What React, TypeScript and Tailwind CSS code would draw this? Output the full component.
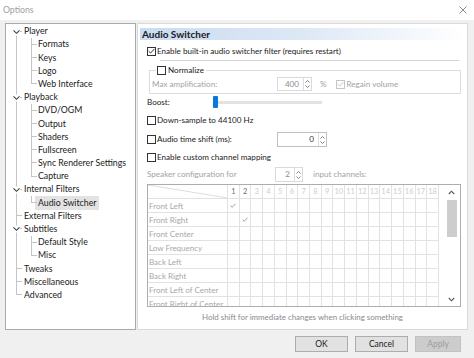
import React from "react";

type TreeNode = { label: string; children?: string[] };

const tree: TreeNode[] = [
  { label: "Player", children: ["Formats", "Keys", "Logo", "Web Interface"] },
  {
    label: "Playback",
    children: ["DVD/OGM", "Output", "Shaders", "Fullscreen", "Sync Renderer Settings", "Capture"],
  },
  { label: "Internal Filters", children: ["Audio Switcher"] },
  { label: "External Filters" },
  { label: "Subtitles", children: ["Default Style", "Misc"] },
  { label: "Tweaks" },
  { label: "Miscellaneous" },
  { label: "Advanced" },
];

const speakers = [
  "Front Left",
  "Front Right",
  "Front Center",
  "Low Frequency",
  "Back Left",
  "Back Right",
  "Front Left of Center",
  "Front Right of Center",
];

const columns = Array.from({ length: 18 }, (_, i) => i + 1);

// one column of tree guide lines (vertical + branch)
const Guide = ({
  level,
  top,
  bottom,
  branch,
  chevron,
}: {
  level: 0 | 1;
  top?: boolean;
  bottom?: boolean;
  branch?: boolean;
  chevron?: boolean;
}) => (
  <div className={`relative flex h-full shrink-0 flex-col ${level === 0 ? "w-[16px]" : "w-[15px]"}`}>
    <div
      className={`h-1/2 border-[#c4c4c4] ${level === 0 ? "ml-[10px]" : "ml-[9px]"} ${top ? "border-l" : ""} ${
        branch ? "border-b" : ""
      }`}
    />
    <div className={`h-1/2 border-[#c4c4c4] ${level === 0 ? "ml-[10px]" : "ml-[9px]"} ${bottom ? "border-l" : ""}`} />
    {chevron && (
      <span className="absolute left-[6px] top-1/2 flex h-[7px] w-[8px] -translate-y-1/2 items-center justify-center bg-white">
        <svg width="7" height="5" viewBox="0 0 7 5">
          <path d="M0.5 0.8 L3.5 3.8 L6.5 0.8" fill="none" stroke="#3c3c3c" strokeWidth="1.1" />
        </svg>
      </span>
    )}
  </div>
);

const Check = ({ checked, disabled }: { checked?: boolean; disabled?: boolean }) => (
  <span
    className={`flex h-[9px] w-[9px] shrink-0 items-center justify-center border bg-white ${
      disabled ? "border-[#c6c6c6]" : "border-[#333333]"
    }`}
  >
    {checked && (
      <svg width="7" height="6" viewBox="0 0 7 6">
        <path
          d="M0.6 3.1 L2.6 5 L6.4 0.9"
          fill="none"
          stroke={disabled ? "#c6c6c6" : "#333333"}
          strokeWidth="1"
        />
      </svg>
    )}
  </span>
);

const Spin = ({ value, width, disabled }: { value: string; width: string; disabled?: boolean }) => (
  <div
    className={`flex h-[15px] shrink-0 border bg-white ${width} ${
      disabled ? "border-[#dadada] text-[#8c8c8c]" : "border-[#bfbfbf] text-[#333333]"
    }`}
  >
    <span className="flex flex-1 items-center justify-end pr-[4px]">{value}</span>
    <div className="flex w-[8px] flex-col items-center justify-center gap-[2px] border-l border-[#dcdcdc]">
      <svg width="5" height="3" viewBox="0 0 5 3">
        <path d="M0.5 2.5 L2.5 0.5 L4.5 2.5" fill="none" stroke="#777777" strokeWidth="0.9" />
      </svg>
      <svg width="5" height="3" viewBox="0 0 5 3">
        <path d="M0.5 0.5 L2.5 2.5 L4.5 0.5" fill="none" stroke="#777777" strokeWidth="0.9" />
      </svg>
    </div>
  </div>
);

const TreePanel = () => {
  const rows: React.ReactNode[] = [];
  tree.forEach((node, i) => {
    const first = i === 0;
    const last = i === tree.length - 1;
    rows.push(
      <div key={node.label} className="flex h-[13.2px] items-center">
        <Guide level={0} top={!first} bottom={!last} branch chevron={!!node.children} />
        <span className="ml-[2px] whitespace-nowrap">{node.label}</span>
      </div>
    );
    node.children?.forEach((child, j) => {
      const selected = child === "Audio Switcher";
      rows.push(
        <div key={child} className="flex h-[13.2px] items-center">
          <Guide level={0} top bottom />
          <Guide level={1} top bottom={j < node.children!.length - 1} branch />
          <span
            className={`flex h-full items-center whitespace-nowrap ${
              selected ? "-ml-[2px] bg-[#e3e3e3] px-[3px]" : "ml-[1px]"
            }`}
          >
            {child}
          </span>
        </div>
      );
    });
  });

  return (
    <div className="flex h-[307px] w-[131px] shrink-0 flex-col border border-[#a9a9a9] bg-white pt-[1px] text-[8.75px] text-[#1a1a1a]">
      {rows}
    </div>
  );
};

const ChannelGrid = () => (
  <div className="mt-[2px] flex h-[123px] w-[314px] overflow-hidden border border-[#adadad] bg-white">
    <div className="flex w-[295px] flex-col">
      <div className="grid h-[14px] shrink-0 grid-cols-[80px_repeat(18,11.72px)]">
        <div className="border-b border-r border-[#e2e2e2]">
          <svg width="80" height="13" viewBox="0 0 80 13">
            <line x1="0" y1="0" x2="80" y2="13" stroke="#dddddd" strokeWidth="1" />
          </svg>
        </div>
        {columns.map((c) => (
          <div
            key={c}
            className={`flex items-center justify-center border-b border-r border-[#e2e2e2] text-[7.5px] ${
              c <= 2 ? "text-[#6e6e6e]" : "text-[#cdcdcd]"
            }`}
          >
            {c}
          </div>
        ))}
      </div>
      {speakers.map((s, r) => (
        <div key={s} className="grid h-[14px] shrink-0 grid-cols-[80px_repeat(18,11.72px)]">
          <div className="flex items-center border-b border-r border-[#e2e2e2] pl-[1px] text-[8px] text-[#a8a8a8] whitespace-nowrap">
            {s}
          </div>
          {columns.map((c) => (
            <div
              key={c}
              className="flex items-center justify-center border-b border-r border-[#e2e2e2] text-[#9a9a9a]"
            >
              {c === r + 1 && r < 2 && (
                <svg width="6" height="5" viewBox="0 0 6 5">
                  <path d="M0.5 2.6 L2.2 4.3 L5.5 0.7" fill="none" stroke="#a0a0a0" strokeWidth="1" />
                </svg>
              )}
            </div>
          ))}
        </div>
      ))}
    </div>
    <div className="flex w-[17px] flex-col items-center">
      <div className="flex h-[14px] items-center justify-center">
        <svg width="7" height="5" viewBox="0 0 7 5">
          <path d="M0.8 4 L3.5 1.2 L6.2 4" fill="none" stroke="#555555" strokeWidth="1.1" />
        </svg>
      </div>
      <div className="mt-[1px] h-[37px] w-[10px] bg-[#cdcdcd]" />
      <div className="flex-1" />
      <div className="flex h-[13px] items-center justify-center">
        <svg width="7" height="5" viewBox="0 0 7 5">
          <path d="M0.8 1 L3.5 3.8 L6.2 1" fill="none" stroke="#555555" strokeWidth="1.1" />
        </svg>
      </div>
    </div>
  </div>
);

const SwitcherPanel = () => (
  <div className="flex h-[307px] w-[331px] shrink-0 flex-col border border-[#dadada] bg-white pt-[4px] text-[8.1px] text-[#1a1a1a]">
    <div className="mx-[2px] flex h-[12px] items-center bg-gradient-to-r from-[#c9dcf1] via-[#dde8f5] to-white pl-[2px] text-[10px] font-bold">
      Audio Switcher
    </div>

    <div className="flex flex-col pl-[9px]">
      <div className="mt-[5px] flex h-[12px] items-center gap-[1px]">
        <Check checked />
        <span>Enable built-in audio switcher filter (requires restart)</span>
      </div>
      <div className="ml-[13px] mt-[3px] w-[299px] border-t border-[#d6d6d6]" />

      <div className="ml-[2px] mt-[9px] h-[24px] w-[312px] border border-[#dcdcdc]">
        <div className="-mt-[7px] ml-[6px] flex h-[12px] w-fit items-center gap-[2px] bg-white pl-[1px] pr-[2px]">
          <Check />
          <span>Normalize</span>
        </div>
        <div className="mt-[1px] flex h-[14px] items-center pl-[2px] text-[#a3a3a3]">
          <span className="w-[125px]">Max amplification:</span>
          <Spin value="400" width="w-[35px] !h-[14px]" disabled />
          <span className="ml-[8px]">%</span>
          <span className="ml-[9px] flex items-center gap-[2px]">
            <Check checked disabled />
            <span>Regain volume</span>
          </span>
        </div>
      </div>

      <div className="mt-[2px] flex h-[12px] items-center">
        <span className="w-[66px]">Boost:</span>
        <span className="h-[12px] w-[5px] rounded-[1px] bg-[#0a78d7]" />
        <span className="h-[3px] w-[104px] bg-[#e2e2e2]" />
      </div>

      <div className="mt-[6px] flex h-[12px] items-center gap-[1px]">
        <Check />
        <span>Down-sample to 44100 Hz</span>
      </div>

      <div className="mt-[6px] flex h-[15px] items-center">
        <span className="flex w-[130px] items-center gap-[1px]">
          <Check />
          <span>Audio time shift (ms):</span>
        </span>
        <Spin value="0" width="w-[50px]" />
      </div>

      <div className="mt-[4px] flex h-[12px] items-center gap-[1px]">
        <Check />
        <span>Enable custom channel mapping</span>
      </div>

      <div className="mt-[4px] flex h-[15px] items-center text-[#a3a3a3]">
        <span className="w-[128px]">Speaker configuration for</span>
        <Spin value="2" width="w-[28px]" disabled />
        <span className="ml-[10px]">input channels:</span>
      </div>

      <ChannelGrid />

      <div className="-ml-[9px] mt-[5px] flex h-[12px] items-center justify-center text-[7.9px] text-[#8a8a8a]">
        Hold shift for immediate changes when clicking something
      </div>
    </div>
  </div>
);

export default function App() {
  return (
    <div className="flex h-[358px] w-[474px] flex-col overflow-hidden bg-[#f0f0f0] font-['Lato',sans-serif] text-[8.5px] leading-none">
      <div className="flex h-[20px] items-center justify-between bg-white pl-[3px] pr-[7px]">
        <span className="text-[8.7px] text-[#a0a0a0]">Options</span>
        <svg width="8" height="8" viewBox="0 0 8 8">
          <path d="M0.5 0.5 L7.5 7.5 M7.5 0.5 L0.5 7.5" stroke="#8a8a8a" strokeWidth="1" />
        </svg>
      </div>

      <div className="flex gap-[1px] pl-[5px] pt-[3px]">
        <TreePanel />
        <SwitcherPanel />
      </div>

      <div className="mt-[6px] flex justify-end gap-[7px] pr-[13px]">
        <button className="h-[16px] w-[53px] border border-[#adadad] bg-[#e1e1e1] text-[#1a1a1a]">OK</button>
        <button className="h-[16px] w-[53px] border border-[#adadad] bg-[#e1e1e1] text-[#1a1a1a]">Cancel</button>
        <button className="h-[16px] w-[46px] border border-[#c2c2c2] bg-[#cccccc] text-[#9c9c9c]">Apply</button>
      </div>
    </div>
  );
}
